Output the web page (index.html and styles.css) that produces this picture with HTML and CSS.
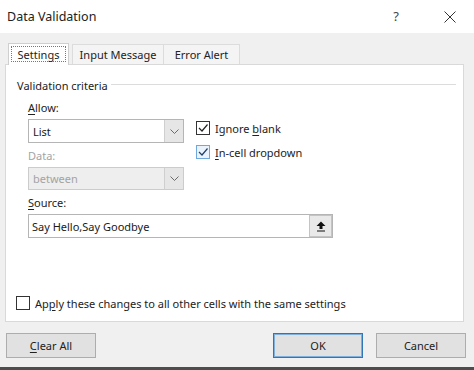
FILE: index.html
```html
<!DOCTYPE html>
<html>
<head>
<meta charset="utf-8">
<link rel="stylesheet" href="styles.css">
</head>
<body>
<div class="dialog">
  <div class="titlebar">
    <span class="title">Data Validation</span>
    <span class="help">?</span>
    <span class="close">
      <svg width="12" height="12" viewBox="0 0 12 12"><path d="M0.5 0.5 L11.5 11.5 M11.5 0.5 L0.5 11.5" stroke="#333" stroke-width="1" fill="none"/></svg>
    </span>
  </div>
  <div class="content">
    <div class="tabs">
      <div class="tab active"><span class="focus-ring">Settings</span></div>
      <div class="tab">Input Message</div>
      <div class="tab">Error Alert</div>
    </div>
    <div class="panel">
      <div class="group-title"><span>Validation criteria</span><span class="rule"></span></div>
      <div class="criteria">
        <div class="left-col">
          <div class="label"><u>A</u>llow:</div>
          <div class="select">
            <span class="value">List</span>
            <span class="drop"><svg width="9" height="5" viewBox="0 0 9 5"><path d="M0.5 0.5 L4.5 4.5 L8.5 0.5" stroke="#6b6b6b" stroke-width="1" fill="none"/></svg></span>
          </div>
          <div class="label disabled gap-data">Data:</div>
          <div class="select disabled">
            <span class="value">between</span>
            <span class="drop"><svg width="9" height="5" viewBox="0 0 9 5"><path d="M0.5 0.5 L4.5 4.5 L8.5 0.5" stroke="#6b6b6b" stroke-width="1" fill="none"/></svg></span>
          </div>
        </div>
        <div class="checks">
          <div class="check">
            <span class="box"><svg width="12" height="12" viewBox="0 0 12 12"><path d="M2 6 L5 9 L10.5 2.5" stroke="#222" stroke-width="1.2" fill="none"/></svg></span>
            <span>Ignore <u>b</u>lank</span>
          </div>
          <div class="check">
            <span class="box hot"><svg width="12" height="12" viewBox="0 0 12 12"><path d="M2 6 L5 9 L10.5 2.5" stroke="#1e3f66" stroke-width="1.2" fill="none"/></svg></span>
            <span><u>I</u>n-cell dropdown</span>
          </div>
        </div>
      </div>
      <div class="label source-label"><u>S</u>ource:</div>
      <div class="source">
        <span class="value">Say Hello,Say Goodbye</span>
        <span class="ref-btn"><svg width="10" height="11" viewBox="0 0 10 11"><path d="M5 0.5 L9.5 5 L6.5 5 L6.5 8 L3.5 8 L3.5 5 L0.5 5 Z" fill="#111"/><rect x="1" y="9.5" width="8" height="1" fill="#111"/></svg></span>
      </div>
      <div class="check apply">
        <span class="box"></span>
        <span>Ap<u>p</u>ly these changes to all other cells with the same settings</span>
      </div>
    </div>
    <div class="buttons">
      <div class="btn"><u>C</u>lear All</div>
      <div class="fill"></div>
      <div class="btn default">OK</div>
      <div class="btn">Cancel</div>
    </div>
  </div>
  <div class="bottom-strip"></div>
</div>
</body>
</html>
```
FILE: styles.css
```css
html, body {
  margin: 0;
  padding: 0;
}
body {
  width: 474px;
  height: 370px;
  overflow: hidden;
  font-family: "Noto Sans", "Open Sans", sans-serif;
  font-size: 11px;
  color: #1a1a1a;
  background: #f0f0f0;
}
u {
  text-decoration: underline;
  text-underline-offset: 2px;
}
.dialog {
  display: flex;
  flex-direction: column;
  height: 370px;
}
.titlebar {
  height: 33px;
  background: #fff;
  display: flex;
  align-items: center;
  padding-left: 7px;
  box-sizing: border-box;
}
.title {
  font-size: 12.5px;
  color: #222;
  flex: 1;
  margin-top: -1px;
}
.help {
  font-size: 13px;
  color: #444;
  margin-right: 45px;
  margin-top: -2px;
}
.close {
  width: 12px;
  height: 12px;
  margin-right: 18px;
  display: flex;
}
.content {
  height: 334px;
  padding: 10px 8px 0 5px;
  box-sizing: border-box;
  display: flex;
  flex-direction: column;
  background: #f0f0f0;
}
.tabs {
  display: flex;
  height: 21px;
  padding-left: 3px;
  align-items: flex-end;
  position: relative;
  z-index: 1;
}
.tab {
  height: 20px;
  box-sizing: border-box;
  border: 1px solid #dcdcdc;
  border-bottom: none;
  background: #f4f4f4;
  display: flex;
  align-items: center;
  justify-content: center;
  padding: 0 4px;
  color: #222;
  margin-left: -1px;
  white-space: nowrap;
}
.tab:nth-child(2) {
  margin-left: 3px;
  width: 92px;
}
.tab:nth-child(3) {
  width: 77px;
}
.tab.active {
  height: 22px;
  width: 61px;
  background: #fff;
  border-color: #cfcfcf;
  margin-left: 0;
  margin-bottom: -1px;
  padding: 2px 2px 3px;
}
.focus-ring {
  border: 1px dotted #777;
  width: 100%;
  height: 100%;
  box-sizing: border-box;
  display: flex;
  align-items: center;
  justify-content: center;
}
.panel {
  height: 258px;
  margin-right: 2px;
  background: #fff;
  border: 1px solid #d9d9d9;
  box-sizing: border-box;
  display: flex;
  flex-direction: column;
}
.group-title {
  display: flex;
  align-items: center;
  margin-top: 14px;
  padding-left: 11px;
  height: 14px;
  line-height: 14px;
  color: #222;
}
.group-title .rule {
  flex: 1;
  height: 1px;
  background: #dcdcdc;
  margin: 0 7px 3px 3px;
}
.criteria {
  display: flex;
  padding-left: 22px;
  margin-top: 8px;
}
.left-col {
  width: 156px;
  display: flex;
  flex-direction: column;
}
.label {
  height: 14px;
  line-height: 14px;
  color: #222;
}
.label.disabled {
  color: #a3a3a3;
}
.select {
  margin-top: 4px;
  height: 24px;
  box-sizing: border-box;
  border: 1px solid #b5b5b5;
  background: #fff;
  display: flex;
  align-items: stretch;
}
.select.disabled {
  background: #eeeeee;
  border-color: #cccccc;
  color: #a3a3a3;
  height: 23px;
}
.select .value {
  flex: 1;
  display: flex;
  align-items: center;
  padding-left: 4px;
}
.drop {
  width: 18px;
  background: #e6e6e6;
  border-left: 1px solid #cfcfcf;
  display: flex;
  align-items: center;
  justify-content: center;
}
.gap-data {
  margin-top: 6px;
}
.checks {
  margin-left: 12px;
  margin-top: 20px;
  display: flex;
  flex-direction: column;
  gap: 10px;
}
.check {
  display: flex;
  align-items: center;
  height: 14px;
  gap: 5px;
  color: #222;
}
.box {
  width: 14px;
  height: 14px;
  box-sizing: border-box;
  border: 1px solid #333;
  background: #fff;
  display: flex;
  align-items: center;
  justify-content: center;
}
.box.hot {
  border-color: #6fa8dc;
  background: #eaf3fb;
}
.source-label {
  margin-top: 6px;
  padding-left: 22px;
}
.source {
  margin: 4px 0 0 22px;
  width: 305px;
  height: 24px;
  box-sizing: border-box;
  border: 1px solid #b5b5b5;
  display: flex;
}
.source .value {
  flex: 1;
  display: flex;
  align-items: center;
  padding-left: 3px;
}
.ref-btn {
  width: 23px;
  background: #e9e9e9;
  border: 1px solid #c4c4c4;
  box-sizing: border-box;
  display: flex;
  align-items: center;
  justify-content: center;
}
.apply {
  margin-top: auto;
  margin-bottom: 11px;
  padding-left: 10px;
}
.buttons {
  display: flex;
  margin-top: 11px;
  margin-left: 1px;
  gap: 13px;
}
.fill {
  flex: 1;
}
.btn {
  width: 90px;
  height: 25px;
  box-sizing: border-box;
  border: 1px solid #adadad;
  background: #e1e1e1;
  display: flex;
  align-items: center;
  justify-content: center;
  color: #222;
}
.btn.default {
  border: 1px solid #2f76b8;
  box-shadow: inset 0 0 0 1px #7fb0dd;
}
.bottom-strip {
  margin-top: auto;
  height: 3px;
  background: #4d4d4d;
}
```
